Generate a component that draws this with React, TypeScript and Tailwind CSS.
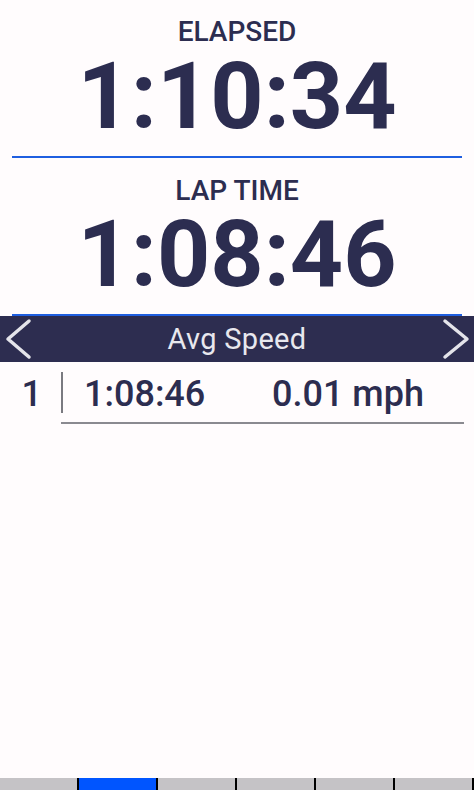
import React from "react";

export default function App() {
  const cells = [0, 1, 2, 3, 4, 5];
  return (
    <div className="w-[474px] h-[790px] bg-[#fffcfd] flex flex-col font-['Roboto',sans-serif] text-[#2c2d50] overflow-hidden">
      <div className="pt-[18px] text-center">
        <div className="text-[28px] leading-[28px] font-medium">ELAPSED</div>
        <div className="text-[93px] leading-[96px] font-bold mt-[3px]">1:10:34</div>
      </div>
      <div className="mx-[12px] mt-[11px] h-[2px] bg-[#1f5fe0]" />
      <div className="mt-[19px] text-center">
        <div className="text-[28px] leading-[28px] font-medium">LAP TIME</div>
        <div className="text-[93px] leading-[96px] font-bold mt-[2px]">1:08:46</div>
      </div>
      <div className="mx-[12px] mt-[11px] h-[2px] bg-[#1f5fe0]" />
      <div className="h-[46px] bg-[#2d2d50] flex items-center justify-between">
        <svg width="36" height="46" viewBox="0 0 36 46">
          <polyline points="29,5 8,23 29,41" fill="none" stroke="#e4e4ea" strokeWidth="3.5" strokeLinecap="round" strokeLinejoin="round" />
        </svg>
        <div className="text-[29px] leading-[46px] tracking-[0.3px] text-[#e8e8ee]">Avg Speed</div>
        <svg width="36" height="46" viewBox="0 0 36 46">
          <polyline points="7,5 29,23 7,41" fill="none" stroke="#e4e4ea" strokeWidth="3.5" strokeLinecap="round" strokeLinejoin="round" />
        </svg>
      </div>
      <div className="flex mt-[10px]">
        <div className="w-[61px] pr-[19px] pt-[2px] text-right text-[36px] leading-[41px] font-medium">1</div>
        <div className="flex-1 mr-[10px] flex flex-col">
          <div className="flex items-start">
            <div className="w-[2px] h-[41px] bg-[#7a7a80]" />
            <div className="ml-[21px] pt-[2px] w-[188px] text-[36px] leading-[41px] font-medium">1:08:46</div>
            <div className="pt-[2px] text-[36px] leading-[41px] font-medium">0.01 mph</div>
          </div>
          <div className="h-[2px] bg-[#8a8a90] mt-[7px]" />
        </div>
      </div>
      <div className="flex-1" />
      <div className="h-[12px] flex">
        {cells.map((i) => (
          <div
            key={i}
            className={
              i === 1
                ? "flex-1 bg-[#0055ff] border-r-2 border-black"
                : "flex-1 bg-[#c5c3c6] border-r-2 border-black"
            }
          />
        ))}
      </div>
    </div>
  );
}
